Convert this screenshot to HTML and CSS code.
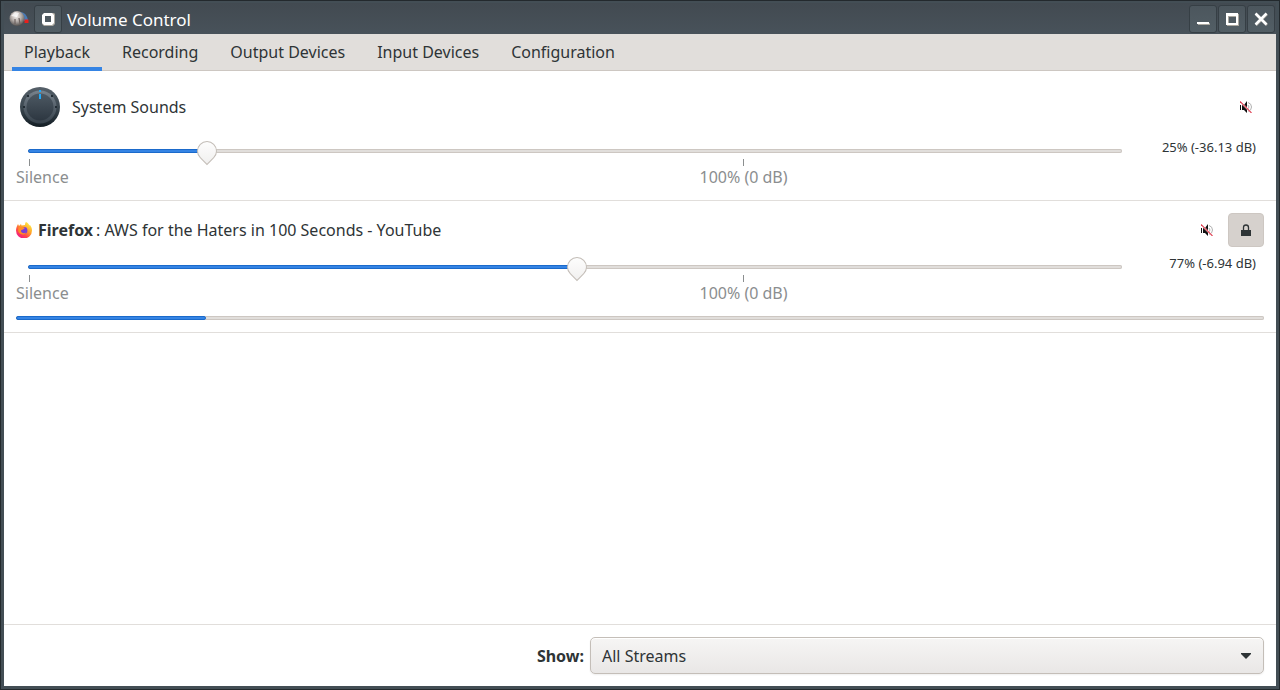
FILE: index.html
```html
<!DOCTYPE html>
<html lang="en">
<head>
<meta charset="utf-8">
<meta name="viewport" content="width=device-width, initial-scale=1">
<title>Volume Control</title>
<link rel="stylesheet" href="styles.css">
</head>
<body>
<div class="window">
  <header class="titlebar">
    <svg class="app-icon" viewBox="0 0 20 18" aria-hidden="true">
      <defs>
        <radialGradient id="ball" cx=".45" cy=".35" r=".65"><stop offset="0" stop-color="#f6f2ef"/><stop offset=".5" stop-color="#b9b1ad"/><stop offset="1" stop-color="#54514f"/></radialGradient>
      </defs>
      <path d="M11 2c5 0 7 4 8 8l-4 1-4-6z" fill="#4a7ab5"/>
      <circle cx="8" cy="8.500" r="7.500" fill="url(#ball)"/>
      <path d="M2 6l4-4 4 1-2 4z" fill="#fff" opacity=".7"/>
      <path d="M6 9v5M10 8l1 6" stroke="#6d6360" stroke-width="1.200"/>
      <path d="M15.500 9.500h4V13h-4z" fill="#e8201c"/>
    </svg>
    <button class="wm-button" type="button" aria-label="Pin window">
      <svg viewBox="0 0 14 14"><path d="M4 1h9l1 1v10l-2 2H3l-2-2V4zm0 3v7h7V4z" fill="#aaa79f" fill-rule="evenodd"/><path d="M3 1h8l2 2v8l-2 2H3l-2-2V3zm1 3v6h6V4z" fill="#fff" fill-rule="evenodd"/></svg>
    </button>
    <h1 class="title">Volume Control</h1>
    <div class="wm-group">
      <button class="wm-button" type="button" aria-label="Minimize">
        <svg viewBox="0 0 14 14"><path d="M2 11h12v2H2z" fill="#aaa79f"/><path d="M1 10h12v2H1z" fill="#fff"/></svg>
      </button>
      <button class="wm-button" type="button" aria-label="Maximize">
        <svg viewBox="0 0 14 14"><path d="M2 2h12v12H2zm2 3v7h8V5z" fill="#aaa79f" fill-rule="evenodd"/><path d="M1 1h12v12H1zm2 3v7h8V4z" fill="#fff" fill-rule="evenodd"/></svg>
      </button>
      <button class="wm-button" type="button" aria-label="Close">
        <svg viewBox="0 0 14 14"><path d="M2 2l11 11M13 2L2 13" stroke="#aaa79f" stroke-width="2.500"/><path d="M1.500 1.500l11 11M12.500 1.500l-11 11" stroke="#fff" stroke-width="2.500"/></svg>
      </button>
    </div>
  </header>

  <nav class="tabs" role="tablist">
    <button class="tab tab-active" type="button" role="tab" aria-selected="true">Playback</button>
    <button class="tab" type="button" role="tab" aria-selected="false">Recording</button>
    <button class="tab" type="button" role="tab" aria-selected="false">Output Devices</button>
    <button class="tab" type="button" role="tab" aria-selected="false">Input Devices</button>
    <button class="tab" type="button" role="tab" aria-selected="false">Configuration</button>
  </nav>

  <main class="streams">
    <section class="stream">
      <div class="stream-head stream-head-large">
        <svg class="knob" viewBox="0 0 40 40" aria-hidden="true">
          <defs>
            <linearGradient id="rim" x2="0" y2="1"><stop offset="0" stop-color="#566069"/><stop offset=".55" stop-color="#38444d"/><stop offset="1" stop-color="#131d24"/></linearGradient>
            <linearGradient id="ring" x2="0" y2="1"><stop offset="0" stop-color="#77828c"/><stop offset="1" stop-color="#36414b"/></linearGradient>
            <linearGradient id="cap" x2="0" y2="1"><stop offset="0" stop-color="#4d5963"/><stop offset="1" stop-color="#2d3741"/></linearGradient>
          </defs>
          <circle cx="20" cy="20" r="20" fill="url(#rim)"/>
          <circle cx="20" cy="20" r="16.500" fill="url(#ring)"/>
          <circle cx="20" cy="20" r="13.500" fill="url(#cap)"/>
          <path d="M3 19h2v2H3zM35 19h2v2h-2zM7 8h2v2H7zM31 8h2v2h-2z" fill="#222c34"/>
          <path d="M19 3h2v2h-2zM19 7h2v5h-2z" fill="#20a8f8"/>
        </svg>
        <h2 class="stream-name" id="system-name">System Sounds</h2>
        <div class="stream-buttons">
          <button class="icon-button" type="button" aria-label="Mute System Sounds">
            <svg class="mute" viewBox="0 0 12 12"><path d="M0 4h1v5H0z" fill="#111"/><path d="M2 4h2l3-4v12L4 9H2z" fill="#111"/><path d="M8 4q2 2 0 4M8 1.500q3.500 1 3.500 4.500T8 10.500" fill="none" stroke="#b0b0b0"/><path d="M0 .5l11.500 11.500" stroke="#fff" stroke-width="1.600"/><path d="M0 .5l11.500 11.500" stroke="#df4053" stroke-width="1.100"/></svg>
          </button>
        </div>
      </div>
      <div class="volume">
        <div class="scale">
          <div class="rail">
            <span class="trough"><span class="fill" style="width: 16.34%"></span></span>
            <input class="slider" type="range" min="0" max="153" step="any" value="25" aria-labelledby="system-name">
          </div>
          <div class="marks">
            <span class="mark mark-start">Silence</span>
            <span class="mark mark-full">100% (0 dB)</span>
          </div>
        </div>
        <output class="level">25% (-36.13 dB)</output>
      </div>
    </section>

    <section class="stream">
      <div class="stream-head">
        <svg class="firefox" viewBox="0 0 16 16" aria-hidden="true">
          <defs>
            <linearGradient id="fox" x1=".85" y1=".05" x2=".2" y2=".95"><stop offset="0" stop-color="#fff04a"/><stop offset=".4" stop-color="#ffa42a"/><stop offset=".7" stop-color="#ff4b46"/><stop offset="1" stop-color="#f0168c"/></linearGradient>
          </defs>
          <path d="M10 0c2 1 3 2.500 3.500 3.500L14 3c1.500 2 2 3.500 2 5.500A8 8 0 0 1 0 8.500C0 6 1 4 2 2l1 2 2-2 .5 1.500L9 3c0-1 .3-2.300 1-3z" fill="url(#fox)"/>
          <circle cx="8" cy="8.500" r="3.400" fill="#7a3fd6"/>
          <path d="M3 5l4 0 2 1-2 1.500c-1 .5-2 0-2 1.500 0 2 3 3 5 1.500-1 3-6 2.500-7.500-.5C2 8 2 6 3 5z" fill="#ff8b28"/>
        </svg>
        <h2 class="stream-name" id="firefox-name"><b class="app">Firefox</b>: AWS for the Haters in 100 Seconds - YouTube</h2>
        <div class="stream-buttons">
          <button class="icon-button" type="button" aria-label="Mute Firefox">
            <svg class="mute" viewBox="0 0 12 12"><path d="M0 4h1v5H0z" fill="#111"/><path d="M2 4h2l3-4v12L4 9H2z" fill="#111"/><path d="M8 4q2 2 0 4M8 1.500q3.500 1 3.500 4.500T8 10.500" fill="none" stroke="#b0b0b0"/><path d="M0 .5l11.500 11.500" stroke="#fff" stroke-width="1.600"/><path d="M0 .5l11.500 11.500" stroke="#df4053" stroke-width="1.100"/></svg>
          </button>
          <button class="icon-button icon-button-on" type="button" aria-label="Lock channels together" aria-pressed="true">
            <svg class="lock" viewBox="0 0 10 12"><path d="M2.500 6V3.500a2.500 2.500 0 0 1 5 0V6" fill="none" stroke="#2e3436" stroke-width="1.300"/><path d="M0 6h10v6H0z" fill="#2e3436"/></svg>
          </button>
        </div>
      </div>
      <div class="volume">
        <div class="scale">
          <div class="rail">
            <span class="trough"><span class="fill" style="width: 50.2%"></span></span>
            <input class="slider" type="range" min="0" max="153" step="any" value="76.8" aria-labelledby="firefox-name">
          </div>
          <div class="marks">
            <span class="mark mark-start">Silence</span>
            <span class="mark mark-full">100% (0 dB)</span>
          </div>
        </div>
        <output class="level">77% (-6.94 dB)</output>
      </div>
      <progress class="peak" max="1248" value="190" aria-label="Firefox peak level"></progress>
    </section>
  </main>

  <footer class="filter">
    <label class="filter-label" for="show">Show:</label>
    <div class="combo">
      <select class="combo-select" id="show">
        <option>All Streams</option>
        <option>Applications</option>
        <option>Virtual Streams</option>
      </select>
      <svg class="combo-arrow" viewBox="0 0 10 6" aria-hidden="true"><path d="M0 0h10v1L5 6 0 1z" fill="#2e3436"/></svg>
    </div>
  </footer>
</div>
</body>
</html>
```
FILE: styles.css
```css
* {
  box-sizing: border-box;
}

body {
  margin: 0;
  background: #262e33;
  color: #2e3436;
  font: 16px/22px "Noto Sans", sans-serif;
}

button,
select {
  color: inherit;
  font: inherit;
}

.window {
  display: flex;
  flex-direction: column;
  min-height: 100vh;
  padding: 2px 3px 3px;
  border: 1px solid #23292d;
  background: #434e55;
}

/* Title bar */

.titlebar {
  display: flex;
  align-items: center;
  gap: 5px;
  height: 31px;
  padding: 0 1px 0 5px;
  background: linear-gradient(#424a51, #48525a);
}

.app-icon {
  width: 20px;
  height: 18px;
}

.wm-button {
  display: grid;
  place-items: center;
  width: 28px;
  height: 28px;
  padding: 0;
  border: 1px solid #363f45;
  border-radius: 3px;
  background: linear-gradient(#4c565d, #525e65);
}

.wm-button svg {
  width: 14px;
  height: 14px;
}

.title {
  flex: 1;
  margin: 0;
  padding-top: 2px;
  color: #fff;
  font-size: 17px;
  font-weight: 400;
}

.wm-group {
  display: flex;
  gap: 1px;
}

/* Tabs */

.tabs {
  display: flex;
  gap: 8px;
  padding: 0 8px;
  border-bottom: 1px solid #cdc7c2;
  background: #e1dedb;
}

.tab {
  height: 37px;
  margin-bottom: -1px;
  padding: 2px 12px 0;
  border: 0;
  border-bottom: 4px solid transparent;
  background: none;
}

.tab-active {
  border-bottom-color: #3584e4;
}

/* Streams */

.streams {
  flex: 1;
  background: #fff;
}

.stream {
  padding: 12px;
  border-bottom: 1px solid #e1dedb;
}

.stream-head {
  display: flex;
  align-items: center;
  gap: 6px;
  height: 34px;
}

.stream-head-large {
  gap: 12px;
  height: 48px;
  padding-left: 4px;
}

.knob {
  width: 40px;
  height: 40px;
}

.firefox {
  width: 16px;
  height: 16px;
}

.stream-name {
  flex: 1;
  margin: 0;
  font-size: 16px;
  font-weight: 400;
}

.app {
  margin-right: 3px;
}

.stream-buttons {
  display: flex;
  gap: 3px;
}

.icon-button {
  display: grid;
  place-items: center;
  width: 36px;
  height: 34px;
  padding: 0;
  border: 1px solid transparent;
  border-radius: 4px;
  background: none;
}

.icon-button-on {
  border-color: #cdc7c2;
  background: #d6d1cd;
}

.mute {
  width: 12px;
  height: 12px;
}

.lock {
  width: 10px;
  height: 12px;
}

.volume {
  display: flex;
  align-items: flex-start;
  gap: 8px;
}

.scale {
  flex: 1;
  padding: 8px 12px 0;
}

.rail {
  display: grid;
  align-items: center;
}

.trough,
.slider {
  grid-area: 1 / 1;
}

.trough {
  height: 4px;
  border-radius: 2px;
  background: #e1dedb;
  box-shadow: inset 0 0 0 1px #cdc7c2;
}

.fill {
  display: block;
  height: 4px;
  border: 1px solid #1b6acb;
  border-radius: 2px;
  background: #3584e4;
}

.slider {
  height: 24px;
  margin: 0 -10px;
  appearance: none;
  background: none;
}

.slider::-webkit-slider-thumb {
  width: 20px;
  height: 20px;
  border: 1px solid #c3bdb7;
  border-radius: 50% 50% 0 50%;
  appearance: none;
  background: linear-gradient(135deg, #fff, #f1f0ef);
  transform: rotate(45deg);
}

.marks {
  display: grid;
  grid-template-columns: 100fr 53fr;
  margin-top: -4px;
  color: #8b8e8f;
}

.mark {
  display: flex;
  flex-direction: column;
  white-space: nowrap;
}

.mark::before {
  width: 1px;
  height: 7px;
  background: #8b8e8f;
  content: "";
}

.mark-start {
  margin-left: -12px;
}

.mark-start::before {
  margin-left: 13px;
}

.mark-full {
  align-items: center;
  width: 1px;
}

.level {
  width: 122px;
  padding: 6px 8px 0 0;
  font-size: 13px;
  line-height: 20px;
  text-align: right;
  white-space: nowrap;
}

.peak {
  display: block;
  width: 100%;
  height: 4px;
  margin-top: 12px;
  appearance: none;
}

.peak::-webkit-progress-bar {
  border-radius: 2px;
  background: #e1dedb;
  box-shadow: inset 0 0 0 1px #cdc7c2;
}

.peak::-webkit-progress-value {
  border: 1px solid #1b6acb;
  border-radius: 2px;
  background: #3584e4;
}

/* Filter */

.filter {
  display: grid;
  grid-template-columns: 568fr 674fr;
  align-items: center;
  gap: 6px;
  padding: 12px;
  border-top: 1px solid #e1dedb;
  background: #fff;
}

.filter-label {
  font-weight: 700;
  text-align: right;
}

.combo {
  display: grid;
  align-items: center;
}

.combo-select,
.combo-arrow {
  grid-area: 1 / 1;
}

.combo-select {
  height: 37px;
  padding: 0 32px 0 11px;
  border: 1px solid #c4beb8;
  border-radius: 5px;
  appearance: none;
  background: linear-gradient(#f6f5f4, #e9e7e6);
  box-shadow: inset 0 1px #fff, 0 1px 2px #0001;
}

.combo-arrow {
  justify-self: end;
  width: 10px;
  height: 6px;
  margin-right: 13px;
  pointer-events: none;
}
```
